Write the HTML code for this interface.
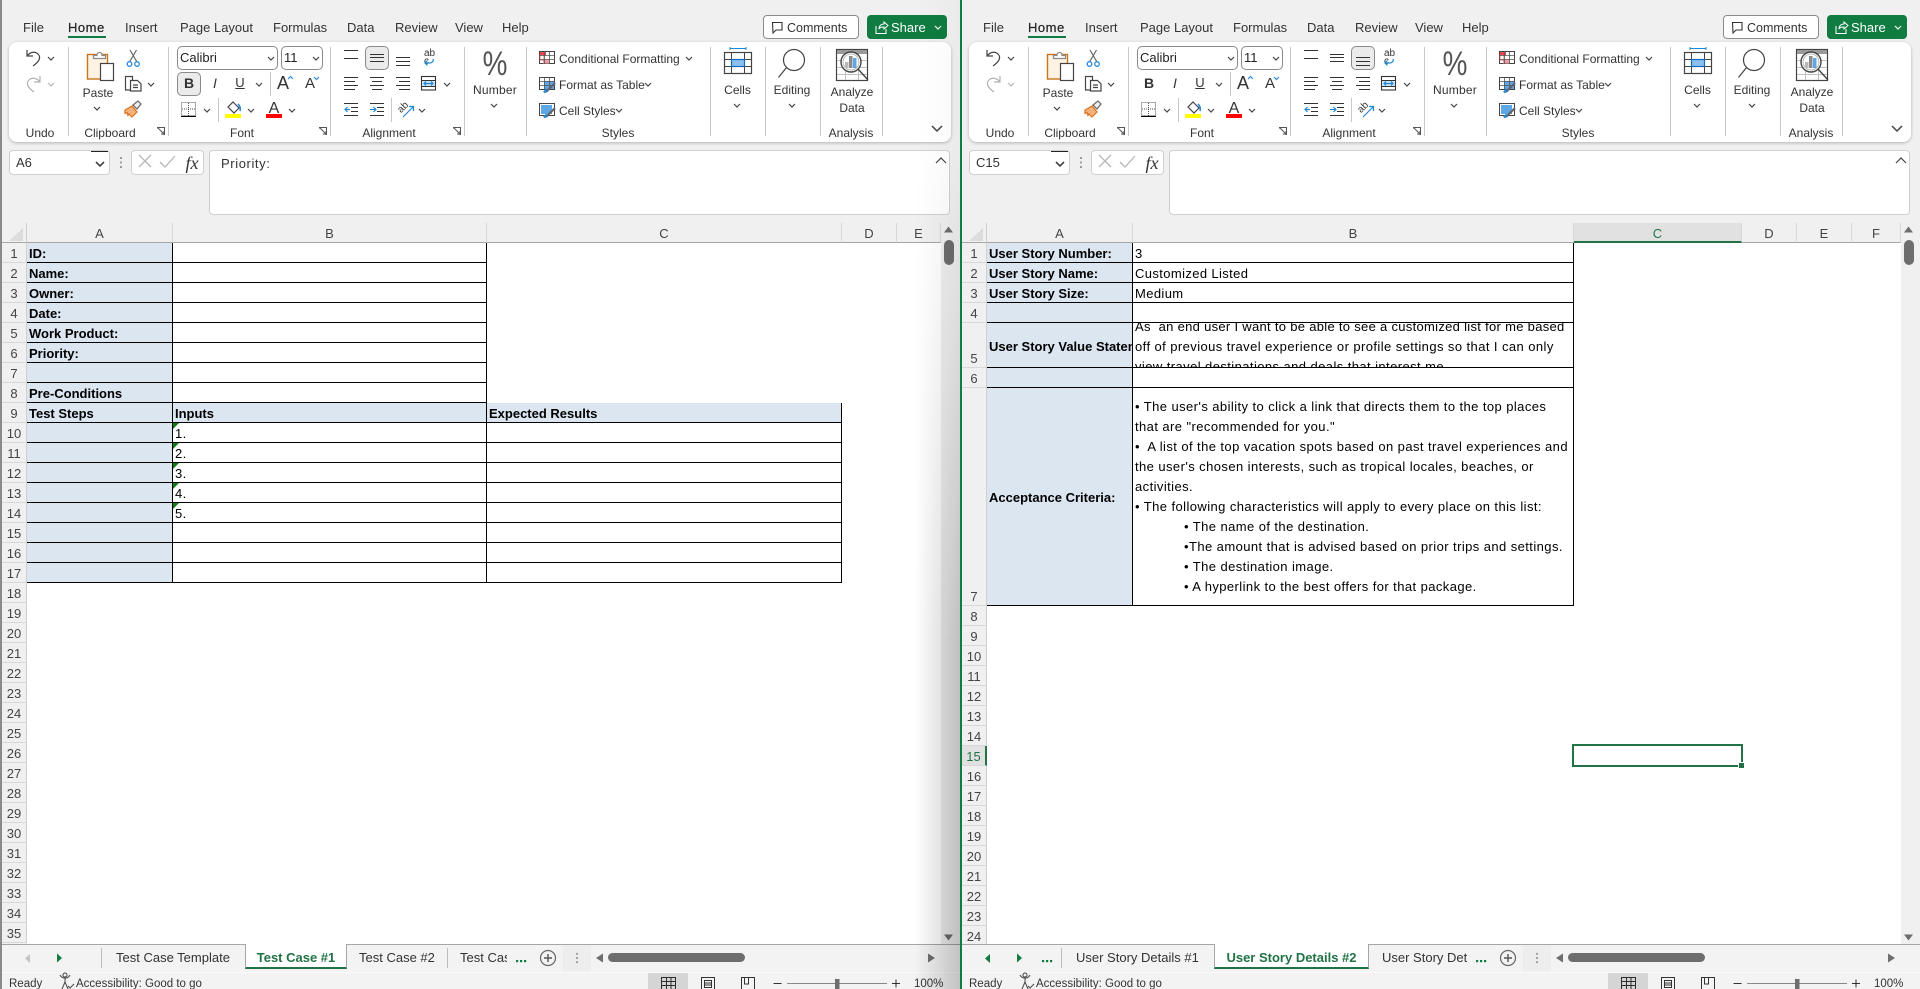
<!DOCTYPE html>
<html><head><meta charset="utf-8"><title>Excel</title>
<style>
html,body{margin:0;padding:0;width:1920px;height:989px;overflow:hidden;background:#f0f0f0}
*{box-sizing:border-box}
body{font-family:"Liberation Sans",sans-serif;font-size:13px;color:#333}
.w{position:absolute;top:0;width:960px;height:989px;overflow:hidden;background:#f0f0f0}
.rb{position:absolute;left:9px;top:42px;width:942px;height:100px;background:#fff;border-radius:8px;box-shadow:0 1px 3px rgba(0,0,0,.25)}
.bx{position:absolute;background:#fff;border:1px solid #d0d0d0;border-radius:4px}
.ib{position:absolute;border:1px solid #8a8a8a;border-radius:5px}
.t{position:absolute;white-space:nowrap;line-height:20px;height:20px}
.c{transform:translateX(-50%)}
.r{font-size:12px}
svg.ic{position:absolute;left:0;top:0;width:960px;height:989px;pointer-events:none}
.ch{position:absolute;top:223px;height:20px;background:#f0f0f0;border-right:1px solid #d8d8d8;border-bottom:1px solid #a6a6a6;text-align:center;line-height:21px;font-size:13px;color:#444}
.rh{position:absolute;left:2px;top:243px;width:25px;height:701px;overflow:hidden;color:#444;text-align:center;font-size:13px}
.rh div{height:20px;line-height:21px;background:#f0f0f0;border-right:1px solid #d0d0d0;border-bottom:1px solid #d8d8d8;position:relative}
.rh div.b{line-height:normal;display:flex;align-items:flex-end;justify-content:center;padding-bottom:1px}
.sh{position:absolute;left:27px;top:243px;width:914px;height:701px;background:#fff;overflow:hidden}
table{border-collapse:separate;border-spacing:0;table-layout:fixed;position:absolute;left:0;top:0;color:#000;font-size:13px}
td{height:20px;padding:2px 0 0 2px;border-right:1px solid #000;border-bottom:1px solid #000;overflow:hidden;white-space:nowrap;line-height:17px;position:relative;vertical-align:bottom;letter-spacing:.38px}
td.a{background:#dce6f1;font-weight:bold;padding-left:2px;letter-spacing:0}
td.n{border:0}
td.m{vertical-align:middle}
.g::before{content:"";position:absolute;left:0;top:0;border-style:solid;border-width:6px 6px 0 0;border-color:#107c10 transparent transparent transparent}
.x{position:absolute;color:#000;font-size:13px;line-height:20px;white-space:nowrap;overflow:hidden;letter-spacing:.42px}
.vs{position:absolute;left:941px;top:223px;width:19px;height:721px;background:#f0f0f0}
.tb{position:absolute;left:2px;top:944px;width:958px;height:28px;background:#f3f3f3;border-top:1px solid #a6a6a6}
.st{position:absolute;left:2px;top:972px;width:958px;height:17px;background:#f3f3f3;border-top:1px solid #fafafa;overflow:hidden}
.shade{position:absolute;left:915px;top:0;width:45px;height:989px;background:linear-gradient(to right,rgba(0,0,0,0),rgba(0,0,0,.2));-webkit-mask-image:linear-gradient(to bottom,rgba(0,0,0,.1) 15%,#000 65%);mask-image:linear-gradient(to bottom,rgba(0,0,0,.1) 15%,#000 65%);pointer-events:none}
.at{position:absolute;top:944px;height:25px;background:#fff;border-left:1px solid #a6a6a6;border-right:1px solid #a6a6a6;border-bottom:2px solid #217346;color:#217346;font-weight:bold;text-align:center;line-height:27px;font-size:13px}
.pc{position:absolute;left:495px;top:48px;font-size:34px;line-height:32px;height:32px;transform:translateX(-50%) scaleX(.82);color:#555;white-space:nowrap}
</style></head>
<body>
<svg width="0" height="0" style="position:absolute">
<defs>
<symbol id="icons" viewBox="0 0 960 989" overflow="visible">
<g fill="none" stroke="#444" stroke-width="1.2">
<!-- chevrons -->
<path d="M48 57l3 3 3-3M94 107l3 3 3-3M148 83l3 3 3-3M268 57l3 3 3-3M313 57l3 3 3-3M256 83l3 3 3-3M204 109l3 3 3-3M248 109l3 3 3-3M289 109l3 3 3-3M444 83l3 3 3-3M419 109l3 3 3-3M491 104l3 3 3-3M686 57l3 3 3-3M645 83l3 3 3-3M616 109l3 3 3-3M734 104l3 3 3-3M789 104l3 3 3-3"/>
<path d="M48 83l3 3 3-3" stroke="#b5b5b5"/>
<path d="M932 126l5 5 5-5" stroke-width="1.5"/>
<path d="M96 162l4 4 4-4" stroke-width="1.6"/>
<path d="M936 163l5-5 5 5"/>
<path d="M935 26l3 3 3-3" stroke="#fff"/>
<!-- undo / redo -->
<path d="M27 50v6h6M27 56c3-4 8-5 11-2 3 3 2 7-5 12"/>
<path d="M40 76v6h-6M40 82c-3-4-8-5-11-2-3 3-2 7 5 12" stroke="#b0b0b0"/>
<!-- paste -->
<rect x="87.5" y="54.5" width="20" height="24.500" stroke="#c9731a" stroke-width="1.4" fill="#fdf3e3"/>
<path d="M93.500 58v-2.500h3.500c0-4 5-4 5 0h3.500v3h-12z" fill="#fff" stroke="#8a8a8a"/>
<rect x="100.500" y="63.500" width="13" height="17" fill="#fff"/>
<!-- cut -->
<path d="M130 50l7 12M136.500 50l-7 12" stroke="#666"/>
<circle cx="129.500" cy="64" r="2.300" stroke="#2b88d8" stroke-width="1.300"/><circle cx="137" cy="64" r="2.300" stroke="#2b88d8" stroke-width="1.300"/>
<!-- copy -->
<path d="M130 90h-4.500V76.500h7v4"/><path d="M130.500 80.500h7l3.500 3.500v7h-10.500z" fill="#fff"/><path d="M133 85h5M133 87.500h5"/>
<!-- painter -->
<path d="M125 110l7-4 5 6-5 5-3-3-1 1.500-1-3-2 1z" fill="#f6b27a" stroke="#d9731f"/>
<path d="M133 105l5-4 3 3-4 5z" fill="#eee" stroke="#666"/>
<!-- dialog launchers -->
<path d="M157.500 128.500v-1h7v7h-1M158 128l6 6M164 131v3h-3" stroke="#555" stroke-width="1"/>
<path d="M319.500 128.500v-1h7v7h-1M320 128l6 6M326 131v3h-3" stroke="#555" stroke-width="1"/>
<path d="M453.500 128.500v-1h7v7h-1M454 128l6 6M460 131v3h-3" stroke="#555" stroke-width="1"/>
<!-- separators -->
<path d="M68.500 47v89M168.500 47v89M330.500 47v89M464.500 47v89M526.500 47v89M710.500 47v89M765.500 47v89M820.500 47v89M882.500 47v89" stroke="#c8c8c8" stroke-width="1"/>
<path d="M270.500 72v24M218.500 98v24M391.500 98v24" stroke="#c8c8c8" stroke-width="1"/>
<!-- borders -->
<rect x="181.500" y="102.500" width="14" height="13" stroke="#555" stroke-dasharray="1 1" stroke-width="1"/>
<path d="M188.500 103v13M182 109h13" stroke="#555" stroke-dasharray="1 1" stroke-width="1"/><path d="M181 116.500h15" stroke="#000" stroke-width="1"/>
<!-- fill -->
<path d="M233 102l6 6-5 5-6-6z" fill="#fff"/><path d="M238 104c2 2 3 4 2 7" stroke="#2b88d8" stroke-width="1.600"/>
<rect x="225" y="114" width="16" height="4" fill="#ff0" stroke="none"/>
<rect x="266" y="114" width="16" height="4" fill="#f00" stroke="none"/>
<!-- grow shrink carets -->
<path d="M288 79l2.500-2.500 2.500 2.500M314 77l2.500 2.500 2.500-2.500" stroke="#2b88d8"/>
<!-- align -->
<g stroke-width="1.100" stroke="#333">
<path d="M344 50.500h14M344 58.500h14"/>
<path d="M370 54.500h14M370 57.500h14M370 61.500h14"/>
<path d="M396 57.500h14M396 61.500h14M396 65.500h14"/>
<path d="M344 77.500h14M344 81.500h11M344 85.500h14M344 89.500h11"/>
<path d="M370 77.500h14M372 81.500h10M370 85.500h14M372 89.500h10"/>
<path d="M396 77.500h14M399 81.500h11M396 85.500h14M399 89.500h11"/>
<path d="M344 103.500h14M351 107.500h7M351 111.500h7M344 115.500h14"/>
<path d="M370 103.500h14M377 107.500h7M377 111.500h7M370 115.500h14"/>
<rect x="421.500" y="76.500" width="14" height="13.500" fill="#fff"/><rect x="422" y="80" width="13" height="6.500" fill="#cfe4f7" stroke="none"/><path d="M421 80.500h15M421 86.500h15"/>
</g>
<g stroke="#1e88d4" stroke-width="1.200">
<path d="M424 83.500h9M426 81.500l-2 2 2 2M431 81.500l2 2-2 2"/>
<path d="M345 109.500h5M347.500 107l-2.500 2.500 2.500 2.500"/>
<path d="M370 109.500h6M373.500 107l2.500 2.500-2.500 2.500"/>
<path d="M433 59c1 2-1 4-3 4h-5M427.500 60.500l-2.500 2.500 2.500 2.500"/>
<path d="M403 117l10-10M409 106.500h4.500v4.500"/>
</g>
<!-- styles icons -->
<rect x="539.500" y="51.500" width="15" height="12" stroke="#444" stroke-width="1"/>
<rect x="540" y="52" width="6" height="3.500" fill="#e5484d" stroke="none"/><rect x="543" y="59.500" width="7" height="4" fill="#f49aa0" stroke="none"/><rect x="540" y="55" width="4" height="5" fill="#fff" stroke="#e5484d" stroke-width=".8"/>
<path d="M544.500 52v12M549.500 52v12M540 55.500h15M540 59.500h15" stroke="#555" stroke-width=".8"/>
<rect x="539.500" y="77.500" width="15" height="12" stroke="#444" stroke-width="1"/><rect x="544" y="81" width="10" height="8" fill="#5ea7e6" stroke="none"/><path d="M544.500 78v12M549.500 78v12M540 81.500h15M540 85.500h15" stroke="#555" stroke-width=".8"/><path d="M546 92l9-9" stroke="#666" stroke-width="2.200"/><path d="M544 92.500l3-3" stroke="#1e88d4" stroke-width="2.500"/>
<rect x="539.500" y="103.500" width="15" height="12" stroke="#444" stroke-width="1"/><rect x="541" y="105" width="11" height="9" fill="#5ea7e6" stroke="none"/><path d="M546 117l9-9" stroke="#666" stroke-width="2.200"/><path d="M544 117.500l3-3" stroke="#1e88d4" stroke-width="2.500"/>
<!-- cells -->
<path d="M730 48.500h16M730 47v3M746 47v3" stroke="#1e88d4" stroke-width="1"/>
<rect x="724.500" y="52.500" width="27" height="21"/><path d="M725 59.500h26M725 66.500h26M731.500 53v20M744.500 53v20" stroke-width="1"/>
<rect x="731.500" y="59.500" width="13" height="7" fill="#8cc0ef" stroke="#0f6cbd" stroke-width="1.200"/>
<!-- editing -->
<circle cx="794" cy="60" r="10.500"/><path d="M786.500 67.500l-8 10"/>
<!-- analyze -->
<rect x="836.500" y="49.500" width="31" height="31"/><rect x="837" y="50" width="30" height="4" fill="#9a9a9a" stroke="none"/>
<path d="M837 60.500h30M837 67.500h30M837 74.500h30M845.500 54v26M858.500 54v26" stroke="#c0c0c0" stroke-width="1"/>
<circle cx="851" cy="62" r="10" fill="#fff" stroke-width="1.400"/><circle cx="851" cy="62" r="8" stroke="#aaa" stroke-width=".8"/>
<rect x="845" y="62" width="3.500" height="6" fill="#b8b8b8" stroke="none"/><rect x="849" y="56" width="3.500" height="12" fill="#8a8a8a" stroke="none"/><rect x="853" y="58" width="3.500" height="10" fill="#5ea7e6" stroke="none"/>
<path d="M858 69l10 11" stroke-width="1.400"/>
<!-- comments / share -->
<path d="M772.500 22.500h9.500v7.500h-6l-3 3z" stroke="#333" stroke-width="1.100" fill="#fff"/>
<path d="M876 26v7.500h10V29M879 29c0-3 2-5 5-5v-2l4 3.500-4 3.500v-2c-2 0-4 0-5 2z" stroke="#fff" stroke-width="1"/>
<!-- formula bar -->
<path d="M91 151.500h17" stroke="#222" stroke-width="1"/>
<path d="M139 155l12 12M151 155l-12 12M160 162l5 5 10-11" stroke="#b8b8b8" stroke-width="1.300"/>
<path d="M121 157v2M121 161.500v2M121 166v2" stroke="#888" stroke-width="1.600"/>
<!-- tab bar -->
<path d="M101.500 948v20M447.500 948v20" stroke="#bdbdbd" stroke-width="1"/>
<circle cx="548" cy="958" r="7.500" stroke="#666" stroke-width="1.200"/><path d="M548 954v8M544 958h8" stroke="#555" stroke-width="1.400"/>
<!-- status bar -->
<g stroke-width="1" stroke="#333">
<path d="M661.500 977.500h14v12h-14zM666.500 977v13M671 977v13M661 981.500h15M661 985.500h15"/>
<path d="M701.500 977.500h13v12h-13z"/><path d="M704.500 980.500h7v7h-7zM705 983h6M705 985h6"/>
<path d="M741.500 977.500h13v12h-13zM748.500 977.500v6.500h-4v-6.500"/>
<path d="M773.500 983.500h8M892 983.500h8M896 979.500v8"/>
<path d="M787 983.500h100" stroke="#888"/>
</g>
<circle cx="65" cy="975" r="2" stroke="#444" stroke-width="1"/>
<path d="M60 975c1 2 3 3 5 3s4-1 5-3M65 978v4M62 989l3-7 3 7" stroke="#444" stroke-width="1"/>
<path d="M68 986l2 2 4-4" stroke="#444" stroke-width="1"/>
</g>
<g stroke="none">
<path d="M57 953.500l5 4.500-5 4.500z" fill="#107c41"/>
<rect x="516" y="960" width="2.200" height="2.200" fill="#107c41"/><rect x="520" y="960" width="2.200" height="2.200" fill="#107c41"/><rect x="524" y="960" width="2.200" height="2.200" fill="#107c41"/>
<rect x="563" y="945" width="28" height="26" fill="#ededed"/>
<circle cx="577" cy="953.800" r="1.100" fill="#999"/><circle cx="577" cy="958" r="1.100" fill="#999"/><circle cx="577" cy="962.200" r="1.100" fill="#999"/>
<path d="M603 953.500l-7 4.500 7 4.500z" fill="#6e6e6e"/>
<rect x="608" y="953" width="137" height="9" rx="4.500" fill="#6e6e6e"/>
<path d="M928 953.500l7 4.500-7 4.500z" fill="#6e6e6e"/>
<!-- vertical scroll -->
<path d="M948.500 226.500l4.500 6h-9z" fill="#6e6e6e"/>
<rect x="944" y="240" width="10" height="25" rx="5" fill="#6e6e6e"/>
<path d="M948.500 940.500l-4.500-6h9z" fill="#6e6e6e"/>
<!-- corner triangle -->
<path d="M23 228v13H9z" fill="#dcdcdc"/>
<rect x="648" y="973" width="40" height="16" fill="#e0e0e0" style="mix-blend-mode:multiply"/>
<rect x="835" y="979" width="4.500" height="10" fill="#6e6e6e"/>
</g>
</symbol>
</defs>
</svg>

<!-- ============ WINDOW 1 ============ -->
<div class="w" style="left:0">
<div style="position:absolute;left:0;top:0;width:2px;height:989px;background:#8a8a8a;z-index:9"></div>
<div class="t" style="left:23px;top:18px">File</div>
<div class="t" style="left:68px;top:18px;color:#222;-webkit-text-stroke:.2px #222;letter-spacing:.5px">Home</div>
<div style="position:absolute;left:68px;top:36px;width:38px;height:2px;background:#107c41"></div>
<div class="t" style="left:125px;top:18px">Insert</div>
<div class="t" style="left:180px;top:18px">Page Layout</div>
<div class="t" style="left:273px;top:18px">Formulas</div>
<div class="t" style="left:347px;top:18px">Data</div>
<div class="t" style="left:395px;top:18px">Review</div>
<div class="t" style="left:455px;top:18px">View</div>
<div class="t" style="left:502px;top:18px">Help</div>
<div class="bx" style="left:763px;top:15px;width:96px;height:24px;border-color:#8a8a8a"></div>
<div class="t" style="left:787px;top:18px;font-size:12.5px">Comments</div>
<div style="position:absolute;left:867px;top:15px;width:80px;height:24px;background:#107c41;border-radius:4px"></div>
<div class="t" style="left:891px;top:18px;color:#fff">Share</div>
<div class="rb"></div>
<div class="ib" style="left:177px;top:46px;width:101px;height:24px"></div>
<div class="ib" style="left:281px;top:46px;width:42px;height:24px"></div>
<div class="ib" style="left:177px;top:72px;width:24px;height:24px;background:#ebebeb"></div>
<div class="ib" style="left:365px;top:46px;width:24px;height:24px;background:#ebebeb"></div>
<div class="bx" style="left:9px;top:150px;width:101px;height:25px"></div>
<div class="bx" style="left:131px;top:150px;width:73px;height:25px"></div>
<div class="bx" style="left:209px;top:150px;width:741px;height:65px"></div>
<div class="t c r" style="left:98px;top:83px">Paste</div>
<div class="t c r" style="left:40px;top:123px">Undo</div>
<div class="t c r" style="left:110px;top:123px">Clipboard</div>
<div class="t c r" style="left:242px;top:123px">Font</div>
<div class="t c r" style="left:389px;top:123px">Alignment</div>
<div class="t c r" style="left:618px;top:123px">Styles</div>
<div class="t c r" style="left:851px;top:123px">Analysis</div>
<div class="t" style="left:180px;top:48px;color:#222">Calibri</div>
<div class="t" style="left:284px;top:48px;color:#222">11</div>
<div class="t c" style="left:189px;top:73px;font-weight:bold;font-size:14px">B</div>
<div class="t c" style="left:215px;top:73px;font-style:italic;font-size:14px">I</div>
<div class="t c" style="left:240px;top:73px;font-size:13px;text-decoration:underline">U</div>
<div class="t c" style="left:283px;top:73px;font-size:18px">A</div>
<div class="t c" style="left:310px;top:74px;font-size:15px">A</div>
<div class="t c" style="left:274px;top:99px;font-size:16px">A</div>
<div class="t" style="left:424px;top:44px;font-size:10px">ab</div>
<div class="t" style="left:424px;top:52px;font-size:10px">c</div>
<div class="t" style="left:398px;top:98px;font-size:10px;transform:rotate(-45deg)">ab</div>
<div class="pc">%</div>
<div class="t c r" style="left:495px;top:80px;letter-spacing:.2px">Number</div>
<div class="t r" style="left:559px;top:49px">Conditional Formatting</div>
<div class="t r" style="left:559px;top:75px">Format as Table</div>
<div class="t r" style="left:559px;top:101px">Cell Styles</div>
<div class="t c r" style="left:737.5px;top:80px">Cells</div>
<div class="t c r" style="left:792px;top:80px">Editing</div>
<div class="t c r" style="left:852px;top:82px">Analyze</div>
<div class="t c r" style="left:852px;top:98px">Data</div>
<div class="t" style="left:16px;top:153px">A6</div>
<div class="t" style="left:192px;top:153px;font-family:'Liberation Serif',serif;font-style:italic;font-size:18px;transform:translateX(-50%);color:#333">fx</div>
<div class="t" style="left:221px;top:154px;letter-spacing:.6px">Priority:</div>

<div class="ch" style="left:27px;width:146px">A</div>
<div class="ch" style="left:173px;width:314px">B</div>
<div class="ch" style="left:487px;width:355px">C</div>
<div class="ch" style="left:842px;width:55px">D</div>
<div class="ch" style="left:897px;width:44px">E</div>
<div style="position:absolute;left:2px;top:223px;width:25px;height:20px;background:#f0f0f0;border-bottom:1px solid #a6a6a6;border-right:1px solid #d0d0d0"></div>
<div class="rh"><div>1</div><div>2</div><div>3</div><div>4</div><div>5</div><div>6</div><div>7</div><div>8</div><div>9</div><div>10</div><div>11</div><div>12</div><div>13</div><div>14</div><div>15</div><div>16</div><div>17</div><div>18</div><div>19</div><div>20</div><div>21</div><div>22</div><div>23</div><div>24</div><div>25</div><div>26</div><div>27</div><div>28</div><div>29</div><div>30</div><div>31</div><div>32</div><div>33</div><div>34</div><div>35</div></div>
<div class="sh">
<table style="width:815px"><colgroup><col style="width:146px"><col style="width:314px"><col style="width:355px"></colgroup>
<tr><td class="a">ID:</td><td></td><td class="n"></td></tr>
<tr><td class="a">Name:</td><td></td><td class="n"></td></tr>
<tr><td class="a">Owner:</td><td></td><td class="n"></td></tr>
<tr><td class="a">Date:</td><td></td><td class="n"></td></tr>
<tr><td class="a">Work Product:</td><td></td><td class="n"></td></tr>
<tr><td class="a">Priority:</td><td></td><td class="n"></td></tr>
<tr><td class="a"></td><td></td><td class="n"></td></tr>
<tr><td class="a">Pre-Conditions</td><td></td><td class="n"></td></tr>
<tr><td class="a">Test Steps</td><td class="a">Inputs</td><td class="a">Expected Results</td></tr>
<tr><td class="a"></td><td class="g">1.</td><td></td></tr>
<tr><td class="a"></td><td class="g">2.</td><td></td></tr>
<tr><td class="a"></td><td class="g">3.</td><td></td></tr>
<tr><td class="a"></td><td class="g">4.</td><td></td></tr>
<tr><td class="a"></td><td class="g">5.</td><td></td></tr>
<tr><td class="a"></td><td></td><td></td></tr>
<tr><td class="a"></td><td></td><td></td></tr>
<tr><td class="a"></td><td></td><td></td></tr>
</table>
</div>
<div class="vs"></div>
<div class="tb"></div>
<div class="st"></div>
<svg class="ic" viewBox="0 0 960 989"><use href="#icons" width="960" height="989"/><path d="M30 954l-5 4.500 5 4.500z" fill="#c4c4c4"/></svg>
<div class="t" style="left:116px;top:948px">Test Case Template</div>
<div class="at" style="left:245px;width:102px">Test Case #1</div>
<div class="t" style="left:359px;top:948px">Test Case #2</div>
<div class="t" style="left:460px;top:948px;width:47px;overflow:hidden">Test Case #3</div>
<div class="t" style="left:9px;top:974px;font-size:11.500px">Ready</div>
<div class="t" style="left:76px;top:974px;font-size:11.500px">Accessibility: Good to go</div>
<div class="t" style="left:914px;top:974px;font-size:11.500px">100%</div>
<div class="shade"></div>
</div>

<!-- ============ WINDOW 2 ============ -->
<div class="w" style="left:960px">
<div style="position:absolute;left:0;top:0;width:2px;height:989px;background:#107c41;z-index:9"></div>
<div class="t" style="left:23px;top:18px">File</div>
<div class="t" style="left:68px;top:18px;color:#222;-webkit-text-stroke:.2px #222;letter-spacing:.5px">Home</div>
<div style="position:absolute;left:68px;top:36px;width:38px;height:2px;background:#107c41"></div>
<div class="t" style="left:125px;top:18px">Insert</div>
<div class="t" style="left:180px;top:18px">Page Layout</div>
<div class="t" style="left:273px;top:18px">Formulas</div>
<div class="t" style="left:347px;top:18px">Data</div>
<div class="t" style="left:395px;top:18px">Review</div>
<div class="t" style="left:455px;top:18px">View</div>
<div class="t" style="left:502px;top:18px">Help</div>
<div class="bx" style="left:763px;top:15px;width:96px;height:24px;border-color:#8a8a8a"></div>
<div class="t" style="left:787px;top:18px;font-size:12.5px">Comments</div>
<div style="position:absolute;left:867px;top:15px;width:80px;height:24px;background:#107c41;border-radius:4px"></div>
<div class="t" style="left:891px;top:18px;color:#fff">Share</div>
<div class="rb"></div>
<div class="ib" style="left:177px;top:46px;width:101px;height:24px"></div>
<div class="ib" style="left:281px;top:46px;width:42px;height:24px"></div>
<div class="ib" style="left:391px;top:46px;width:24px;height:24px;background:#ebebeb"></div>
<div class="bx" style="left:9px;top:150px;width:101px;height:25px"></div>
<div class="bx" style="left:131px;top:150px;width:73px;height:25px"></div>
<div class="bx" style="left:209px;top:150px;width:741px;height:65px"></div>
<div class="t c r" style="left:98px;top:83px">Paste</div>
<div class="t c r" style="left:40px;top:123px">Undo</div>
<div class="t c r" style="left:110px;top:123px">Clipboard</div>
<div class="t c r" style="left:242px;top:123px">Font</div>
<div class="t c r" style="left:389px;top:123px">Alignment</div>
<div class="t c r" style="left:618px;top:123px">Styles</div>
<div class="t c r" style="left:851px;top:123px">Analysis</div>
<div class="t" style="left:180px;top:48px;color:#222">Calibri</div>
<div class="t" style="left:284px;top:48px;color:#222">11</div>
<div class="t c" style="left:189px;top:73px;font-weight:bold;font-size:14px">B</div>
<div class="t c" style="left:215px;top:73px;font-style:italic;font-size:14px">I</div>
<div class="t c" style="left:240px;top:73px;font-size:13px;text-decoration:underline">U</div>
<div class="t c" style="left:283px;top:73px;font-size:18px">A</div>
<div class="t c" style="left:310px;top:74px;font-size:15px">A</div>
<div class="t c" style="left:274px;top:99px;font-size:16px">A</div>
<div class="t" style="left:424px;top:44px;font-size:10px">ab</div>
<div class="t" style="left:424px;top:52px;font-size:10px">c</div>
<div class="t" style="left:398px;top:98px;font-size:10px;transform:rotate(-45deg)">ab</div>
<div class="pc">%</div>
<div class="t c r" style="left:495px;top:80px;letter-spacing:.2px">Number</div>
<div class="t r" style="left:559px;top:49px">Conditional Formatting</div>
<div class="t r" style="left:559px;top:75px">Format as Table</div>
<div class="t r" style="left:559px;top:101px">Cell Styles</div>
<div class="t c r" style="left:737.5px;top:80px">Cells</div>
<div class="t c r" style="left:792px;top:80px">Editing</div>
<div class="t c r" style="left:852px;top:82px">Analyze</div>
<div class="t c r" style="left:852px;top:98px">Data</div>
<div class="t" style="left:16px;top:153px">C15</div>
<div class="t" style="left:192px;top:153px;font-family:'Liberation Serif',serif;font-style:italic;font-size:18px;transform:translateX(-50%);color:#333">fx</div>

<div class="ch" style="left:27px;width:146px">A</div>
<div class="ch" style="left:173px;width:441px">B</div>
<div class="ch" style="left:614px;width:168px;background:#e1e1e1;color:#217346;border-bottom:2px solid #217346">C</div>
<div class="ch" style="left:782px;width:55px">D</div>
<div class="ch" style="left:837px;width:55px">E</div>
<div class="ch" style="left:892px;width:49px">F</div>
<div style="position:absolute;left:2px;top:223px;width:25px;height:20px;background:#f0f0f0;border-bottom:1px solid #a6a6a6;border-right:1px solid #d0d0d0"></div>
<div class="rh"><div>1</div><div>2</div><div>3</div><div>4</div><div class="b" style="height:45px">5</div><div>6</div><div class="b" style="height:218px">7</div><div>8</div><div>9</div><div>10</div><div>11</div><div>12</div><div>13</div><div>14</div><div style="background:#e1e1e1;color:#217346;border-right:2px solid #217346">15</div><div>16</div><div>17</div><div>18</div><div>19</div><div>20</div><div>21</div><div>22</div><div>23</div><div>24</div></div>
<div class="sh">
<table style="width:587px"><colgroup><col style="width:146px"><col style="width:441px"></colgroup>
<tr><td class="a">User Story Number:</td><td>3</td></tr>
<tr><td class="a">User Story Name:</td><td>Customized Listed</td></tr>
<tr><td class="a">User Story Size:</td><td>Medium</td></tr>
<tr><td class="a"></td><td></td></tr>
<tr style="height:45px"><td class="a m" style="height:45px">User Story Value Statement:</td><td style="height:45px"></td></tr>
<tr><td class="a"></td><td></td></tr>
<tr style="height:218px"><td class="a m" style="height:218px">Acceptance Criteria:</td><td style="height:218px"></td></tr>
</table>
<div class="x" style="left:146px;top:80px;width:440px;height:44px">
<div style="margin:-6px 0 0 2px;letter-spacing:.3px">As&nbsp; an end user I want to be able to see a customized list for me based</div>
<div style="margin-left:2px">off of previous travel experience or profile settings so that I can only</div>
<div style="margin-left:2px">view travel destinations and deals that interest me.</div>
</div>
<div class="x" style="left:148px;top:154px;width:437px;height:217px">
<div>• The user's ability to click a link that directs them to the top places</div>
<div>that are "recommended for you."</div>
<div>•&nbsp; A list of the top vacation spots based on past travel experiences and</div>
<div>the user's chosen interests, such as tropical locales, beaches, or</div>
<div>activities.</div>
<div>• The following characteristics will apply to every place on this list:</div>
<div style="padding-left:49px">• The name of the destination.</div>
<div style="padding-left:49px">•The amount that is advised based on prior trips and settings.</div>
<div style="padding-left:49px">• The destination image.</div>
<div style="padding-left:49px">• A hyperlink to the best offers for that package.</div>
</div>
<div style="position:absolute;left:585px;top:501px;width:171px;height:23px;border:2px solid #217346"></div>
<div style="position:absolute;left:752px;top:520px;width:5px;height:5px;background:#217346;outline:1px solid #fff"></div>
</div>
<div class="vs"></div>
<div class="tb"></div>
<div class="st"></div>
<svg class="ic" viewBox="0 0 960 989"><use href="#icons" width="960" height="989"/><path d="M30 954l-5 4.500 5 4.500z" fill="#107c41"/><rect x="82" y="960" width="2.200" height="2.200" fill="#107c41"/><rect x="86" y="960" width="2.200" height="2.200" fill="#107c41"/><rect x="90" y="960" width="2.200" height="2.200" fill="#107c41"/></svg>
<div class="t" style="left:116px;top:948px">User Story Details #1</div>
<div class="at" style="left:254px;width:155px">User Story Details #2</div>
<div style="position:absolute;left:409px;top:946px;width:50px;height:24px;background:#f3f3f3"></div>
<div class="t" style="left:422px;top:948px;width:85px;overflow:hidden">User Story Details #3</div>
<div class="t" style="left:9px;top:974px;font-size:11.500px">Ready</div>
<div class="t" style="left:76px;top:974px;font-size:11.500px">Accessibility: Good to go</div>
<div class="t" style="left:914px;top:974px;font-size:11.500px">100%</div>
</div>
</body></html>
